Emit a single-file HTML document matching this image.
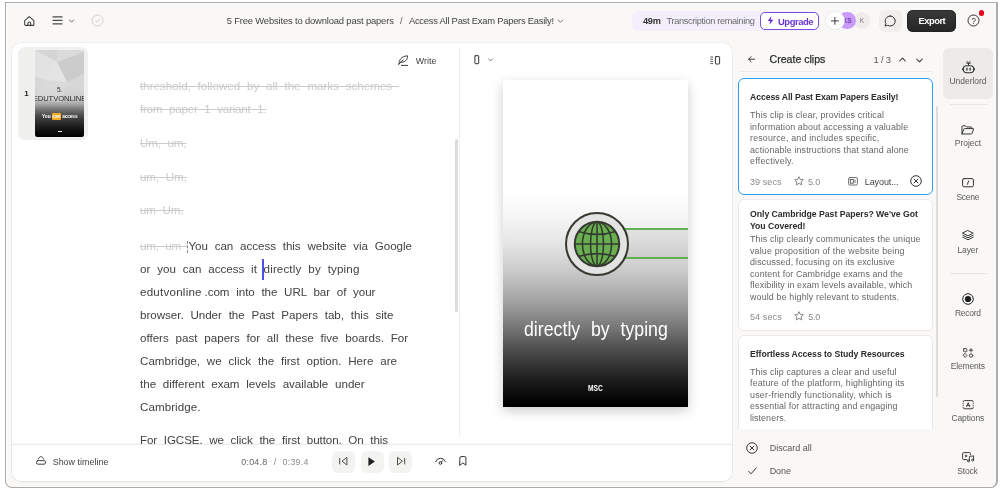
<!DOCTYPE html>
<html lang="en">
<head>
<meta charset="utf-8">
<title>Descript – Create clips</title>
<style>
*{box-sizing:border-box;margin:0;padding:0}
html,body{width:1000px;height:491px;overflow:hidden;background:#fff}
body{font-family:"Liberation Sans",sans-serif;color:#222;position:relative;font-size:10px}
#app{position:absolute;left:0;top:0;width:1000px;height:491px;will-change:transform}
.a{position:absolute}
.t{position:absolute;white-space:pre;line-height:1}
#frame{left:5px;top:2.2px;width:993px;height:485.6px;background:#f9f8f6;border:1.6px solid #ababab;border-right-width:2px;border-radius:0 0 7px 7px;box-shadow:inset 0 0 0 1px rgba(255,255,255,.55)}
#main{left:12px;top:42.5px;width:720px;height:438.5px;background:#fff;border-radius:9px;box-shadow:0 0 0 0.6px rgba(0,0,0,.07),0 1px 2px rgba(0,0,0,.05)}
svg{position:absolute;overflow:visible}
.ic{fill:none;stroke-linecap:round;stroke-linejoin:round}
.s{text-decoration:line-through;text-decoration-thickness:1px}
.card{position:absolute;left:738px;width:195px;background:#fff;border-radius:6px;border:1px solid #ebeae8}
.btn{position:absolute;top:450.5px;width:23px;height:22px;border-radius:6px;background:#f3f3f2}
</style>
</head>
<body>
<div id="app">
<div id="frame" class="a"></div>

<!-- top bar -->
<svg style="left:23.5px;top:15.6px" width="10.6" height="10" viewBox="0 0 10.6 10"><path class="ic" stroke="#3d3d3d" stroke-width="1.05" d="M0.7 4.6 L5.3 0.7 L9.9 4.6 V8.4 a1 1 0 0 1 -1 1 H1.7 a1 1 0 0 1 -1 -1 Z M3.9 9.3 V7.3 a1.4 1.4 0 0 1 2.8 0 V9.3"/></svg>
<svg style="left:53px;top:16px" width="22" height="9" viewBox="0 0 22 9"><path class="ic" stroke="#4a4a4a" stroke-width="1.25" stroke-linecap="butt" d="M0 0.9 H9 M0 4.35 H9 M0 7.8 H9"/><path class="ic" stroke-width="0.95" stroke="#666" d="M16.4 3.9 L18.6 6.2 L20.8 3.9"/></svg>
<svg style="left:90.8px;top:14.2px" width="13" height="13" viewBox="0 0 13 13"><circle cx="6.5" cy="6.5" r="5.5" fill="none" stroke="#d0d0d0" stroke-width="1"/><path d="M4.3 6.7 L5.9 8.2 L8.8 4.9" fill="none" stroke="#d0d0d0" stroke-width="1"/></svg>
<span class="t" style="left:226.7px;top:16px;font-size:9.4px;color:#444;letter-spacing:-0.150px;">5 Free Websites to download past papers</span><span class="t" style="left:400.0px;top:16px;font-size:9.4px;color:#555;">/</span><span class="t" style="left:408.9px;top:16px;font-size:9.4px;color:#444;letter-spacing:-0.237px;">Access All Past Exam Papers Easily!</span>
<svg style="left:557px;top:18.5px" width="7" height="5" viewBox="0 0 7 5"><path class="ic" stroke="#666" stroke-width="0.9" d="M1.2 1 L3.5 3.3 L5.8 1"/></svg>

<div class="a" style="left:632px;top:11px;width:188px;height:20px;border-radius:6px;background:#f3effc"></div>
<span class="t" style="left:643.0px;top:17px;font-size:9.2px;color:#333;font-weight:bold;letter-spacing:-0.264px;">49m</span><span class="t" style="left:666.6px;top:17px;font-size:9.2px;color:#6b6b6b;letter-spacing:-0.334px;">Transcription remaining</span>
<div class="a" style="left:760px;top:12px;width:59px;height:18px;border-radius:5px;background:#fff;border:1px solid #7c4ddb"></div>
<svg style="left:767px;top:16.3px" width="7" height="9" viewBox="0 0 7 9"><path d="M4.3 0.2 L0.6 5.1 H3.1 L2.5 8.8 L6.4 3.8 H3.8 Z" fill="#6a35d8"/></svg>
<span class="t" style="left:778.0px;top:17px;font-size:9.4px;color:#6a35d8;font-weight:bold;letter-spacing:-0.433px;">Upgrade</span>
<div class="a" style="left:853.5px;top:12.1px;width:16.8px;height:16.8px;border-radius:50%;background:#eeedeb"></div>
<span class="t" style="left:859.7px;top:18px;font-size:6.6px;color:#777;">K</span>
<div class="a" style="left:838.2px;top:11.8px;width:17.7px;height:17.7px;border-radius:50%;background:#cb9bfb"></div>
<span class="t" style="left:842.4px;top:18px;font-size:6.7px;color:#6d3fae;font-weight:bold;">KS</span>
<div class="a" style="left:826px;top:11.6px;width:17.8px;height:17.8px;border-radius:50%;background:#fff;box-shadow:0 0 0 0.8px #e9e8e6"></div>
<svg style="left:831.2px;top:16.6px" width="7.8" height="7.8" viewBox="0 0 7.8 7.8"><path class="ic" stroke="#333" stroke-width="0.95" d="M3.9 0.4 V7.4 M0.4 3.9 H7.4"/></svg>

<div class="a" style="left:879px;top:10px;width:22.5px;height:22px;border-radius:6px;background:#f0efed"></div>
<svg style="left:884px;top:14.6px" width="12" height="12" viewBox="0 0 12 12"><path class="ic" stroke="#333" stroke-width="1" d="M6.2 1 a5 5 0 1 1 -2.5 9.3 L1 11 L1.8 8.4 A5 5 0 0 1 6.2 1 Z"/></svg>

<div class="a" style="left:907.2px;top:10px;width:49.2px;height:22px;border-radius:6px;background:linear-gradient(180deg,#3a3a3a,#252525);box-shadow:inset 0 0 0 0.6px #1c1c1c"></div>
<span class="t" style="left:918.6px;top:16px;font-size:9.4px;color:#fff;font-weight:bold;letter-spacing:-0.534px;">Export</span>
<svg style="left:967px;top:14.2px" width="13" height="13" viewBox="0 0 13 13"><circle cx="6.5" cy="6.5" r="5.5" fill="none" stroke="#333" stroke-width="1"/></svg>
<span class="t" style="left:971.3px;top:17px;font-size:8.4px;color:#333;">?</span>
<div class="a" style="left:978.8px;top:10.3px;width:5.4px;height:5.4px;border-radius:50%;background:#e2001a"></div>

<div id="main" class="a"></div>
<!-- scene rail -->
<div class="a" style="left:18px;top:47px;width:69.5px;height:92.5px;border-radius:7px;background:#f0f0ef"></div>
<span class="t" style="left:24.3px;top:90px;font-size:8px;color:#222;font-weight:bold;">1</span>
<div class="a" style="left:35.3px;top:50px;width:48.6px;height:86.7px;border-radius:2.5px;overflow:hidden;background:linear-gradient(180deg,#d4d4d4 0%,#d8d8d8 40%,#cfcfcf 55%,#a8a8a8 62%,#707070 69%,#484848 76%,#262626 85%,#0c0c0c 94%,#000 100%)">
  <svg style="left:0;top:0" width="49" height="52" viewBox="0 0 49 52" opacity=".75"><path d="M0 0 L22 12 L10 30 L0 26 Z" fill="#e6e6e6"/><path d="M22 12 L49 2 L49 24 L32 32 Z" fill="#c9c9c9"/><path d="M10 30 L32 32 L26 52 L0 48 Z" fill="#dfdfdf" opacity=".6"/><path d="M22 12 L32 32 L10 30 Z" fill="#e9e9e9"/><path d="M22 0 L49 0 L49 2 L22 12 Z" fill="#dcdcdc"/></svg>
  <span class="t" style="left:21.8px;top:37px;font-size:6.6px;color:#333">5.</span>
  <span class="t" style="left:-2.6px;top:45px;font-size:7.6px;color:#2a2a2a;letter-spacing:-0.05px">EDUTVONLINE</span>
  <div class="a" style="left:16.6px;top:62.8px;width:8.8px;height:7.2px;background:#f4a81d;border-radius:1px"></div>
  <span class="t" style="left:6.8px;top:65px;font-size:4.8px;color:#fff;font-weight:bold;word-spacing:0.7px;letter-spacing:-0.12px">You can access</span>
  <div class="a" style="left:22.6px;top:80.6px;width:4px;height:1.4px;background:#e4e4e4"></div>
</div>

<!-- transcript -->
<svg style="left:398px;top:55px" width="11" height="11" viewBox="0 0 11 11"><path class="ic" stroke="#333" stroke-width="0.95" d="M1 9 C0.8 5.6 2.8 1.4 9.4 0.8 C10 5.2 6.6 7.6 2.2 7.2 M0.6 9.4 L5.2 5 M3.4 10.4 H9.6"/></svg>
<span class="t" style="left:415.8px;top:57px;font-size:8.9px;color:#444;letter-spacing:0.051px;">Write</span><span class="t" style="left:139.9px;top:80px;font-size:11.6px;color:#cbcbcb;word-spacing:3.6px;letter-spacing:-0.001px;text-decoration:line-through;text-decoration-thickness:1px;">threshold, followed by all the marks schemes </span><span class="t" style="left:139.9px;top:103px;font-size:11.6px;color:#cbcbcb;word-spacing:3.6px;letter-spacing:-0.193px;text-decoration:line-through;text-decoration-thickness:1px;">from paper 1 variant 1.</span><span class="t" style="left:140.0px;top:137px;font-size:11.6px;color:#cbcbcb;word-spacing:3.6px;letter-spacing:-0.144px;text-decoration:line-through;text-decoration-thickness:1px;">Um, um,</span><span class="t" style="left:140.0px;top:171px;font-size:11.6px;color:#cbcbcb;word-spacing:3.6px;letter-spacing:-0.101px;text-decoration:line-through;text-decoration-thickness:1px;">um, Um,</span><span class="t" style="left:140.0px;top:204px;font-size:11.6px;color:#cbcbcb;word-spacing:3.6px;letter-spacing:-0.131px;text-decoration:line-through;text-decoration-thickness:1px;">um Um,</span><span class="t" style="left:140.0px;top:240px;font-size:11.6px;color:#cbcbcb;word-spacing:3.6px;letter-spacing:-0.240px;text-decoration:line-through;text-decoration-thickness:1px;">um, um </span><span class="t" style="left:188.4px;top:240px;font-size:11.6px;color:#424242;word-spacing:3.6px;letter-spacing:-0.032px;">You can access this website via Google</span><span class="t" style="left:140.0px;top:263px;font-size:11.6px;color:#424242;word-spacing:3.6px;letter-spacing:0.002px;">or you can access it</span><span class="t" style="left:263.6px;top:263px;font-size:11.6px;color:#424242;word-spacing:3.6px;letter-spacing:0.130px;">directly by typing</span><span class="t" style="left:140.0px;top:286px;font-size:11.6px;color:#424242;word-spacing:3.6px;letter-spacing:0.226px;">edutvonline</span><span class="t" style="left:204.6px;top:286px;font-size:11.6px;color:#424242;word-spacing:3.6px;letter-spacing:-0.062px;">.com into the URL bar of your</span><span class="t" style="left:140.0px;top:309px;font-size:11.6px;color:#424242;word-spacing:3.6px;letter-spacing:-0.027px;">browser. Under the Past Papers tab, this site</span><span class="t" style="left:140.0px;top:332px;font-size:11.6px;color:#424242;word-spacing:3.6px;letter-spacing:-0.004px;">offers past papers for all these five boards. For</span><span class="t" style="left:140.0px;top:355px;font-size:11.6px;color:#424242;word-spacing:3.6px;letter-spacing:0.010px;">Cambridge, we click the first option. Here are</span><span class="t" style="left:140.0px;top:378px;font-size:11.6px;color:#424242;word-spacing:3.6px;letter-spacing:-0.017px;">the different exam levels available under</span><span class="t" style="left:140.0px;top:401px;font-size:11.6px;color:#424242;word-spacing:3.6px;letter-spacing:0.056px;">Cambridge.</span><span class="t" style="left:140.0px;top:434px;font-size:11.6px;color:#424242;word-spacing:3.6px;letter-spacing:-0.098px;">For IGCSE, we click the first button. On this</span>
<div class="a" style="left:187.1px;top:241px;width:0;height:12px;border-left:1px dashed #8a8a8a"></div>
<div class="a" style="left:262.3px;top:258.5px;width:1.3px;height:21.5px;background:#4a52e0"></div>
<div class="a" style="left:455.3px;top:139px;width:2.6px;height:173px;border-radius:2px;background:#dcdcdc"></div>
<div class="a" style="left:459px;top:48px;width:1px;height:389px;background:#f0f0f0"></div>

<!-- video header icons -->
<svg style="left:474px;top:55px" width="20" height="10" viewBox="0 0 20 10"><rect x="0.9" y="0.7" width="3.8" height="8" rx="0.4" class="ic" stroke="#333" stroke-width="1"/><path class="ic" stroke="#666" stroke-width="0.9" d="M14.6 3.9 L16.6 5.9 L18.6 3.9"/></svg>
<svg style="left:709.5px;top:55.5px" width="11" height="9" viewBox="0 0 11 9"><path d="M0.3 1 H3 M0.3 3.2 H3 M0.3 5.4 H3 M0.3 7.6 H3" stroke="#444" stroke-width="0.9" fill="none"/><rect x="5.4" y="0.6" width="4.2" height="7.4" rx="0.6" class="ic" stroke="#333" stroke-width="1"/></svg>

<!-- canvas -->
<div class="a" style="left:503px;top:79.5px;width:185px;height:327.5px;overflow:hidden;box-shadow:0 4px 11px rgba(0,0,0,.2);background:linear-gradient(180deg,#fff 0.0%,#fff 34.4%,#f5f5f5 42.0%,#e5e5e5 49.9%,#cdcdcd 57.6%,#b2b2b2 64.3%,#949494 70.4%,#757575 75.9%,#505050 82.0%,#323232 87.5%,#161616 93.3%,#050505 97.9%,#000 100.0%)">
  <div class="a" style="left:120px;top:148.5px;width:65px;height:30.5px;background:rgba(0,0,0,.05);border-top:2px solid #62b04e;border-bottom:2px solid #62b04e"></div>
  <svg style="left:62.1px;top:132.2px" width="64" height="64" viewBox="-32 -32 64 64">
    <circle r="31" fill="#e3e3e3" stroke="#353a30" stroke-width="2"/>
    <circle r="22.2" fill="#69af50" stroke="#353a30" stroke-width="2"/>
    <g fill="none" stroke="#353a30" stroke-width="1.6">
      <path d="M0 -22 V22 M-22 0 H22"/>
      <ellipse rx="6.5" ry="22"/>
      <ellipse rx="14.6" ry="22"/>
      <path d="M-18.5 -12.6 Q0 -6.6 18.5 -12.6 M-18.5 12.6 Q0 6.6 18.5 12.6"/>
    </g>
  </svg>
  <span class="t" style="left:20.6px;top:238px;font-size:21px;color:#fff;word-spacing:6.9px;transform:scaleX(0.845);transform-origin:0 50%">directly by typing</span>
  <span class="t" style="left:84.8px;top:304.4px;font-size:8.4px;font-weight:bold;color:#fff;transform:scaleX(0.8);transform-origin:0 50%">MSC</span>
</div>

<!-- playback bar -->
<div class="a" style="left:12px;top:444px;width:720px;height:37px;background:#fff;border-radius:0 0 9px 9px;border-top:1px solid #ebebeb;box-shadow:0 -1px 2px rgba(0,0,0,.03)"></div>
<svg style="left:35.9px;top:456.1px" width="10" height="9" viewBox="0 0 10 9"><path class="ic" stroke-width="1" stroke="#444" d="M2.4 3 C3 1.4 4 0.6 5 0.6 C6 0.6 7 1.4 7.6 3"/><rect x="0.6" y="4.6" width="8.8" height="3.6" rx="1.2" class="ic" stroke-width="1" stroke="#444"/></svg>
<span class="t" style="left:52.7px;top:458px;font-size:8.9px;color:#444;letter-spacing:0.035px;">Show timeline</span><span class="t" style="left:241.2px;top:458px;font-size:8.9px;color:#666;letter-spacing:0.269px;">0:04.8</span><span class="t" style="left:273.8px;top:458px;font-size:8.9px;color:#888;">/</span><span class="t" style="left:282.5px;top:458px;font-size:8.9px;color:#8a8a8a;letter-spacing:0.252px;">0:39.4</span>
<div class="btn" style="left:331.8px"></div>
<div class="btn" style="left:360.6px"></div>
<div class="btn" style="left:389px"></div>
<svg style="left:339.4px;top:457px" width="8.4" height="8.4" viewBox="0 0 8.4 8.4"><path class="ic" stroke="#444" stroke-width="0.95" d="M0.7 1.4 V7 M7.6 0.6 L3 4.2 L7.6 7.8 Z"/></svg>
<svg style="left:368.4px;top:456.6px" width="7.4" height="9.2" viewBox="0 0 7.4 9.2"><path d="M0.4 0.3 L7 4.6 L0.4 8.9 Z" fill="#222"/></svg>
<svg style="left:396.6px;top:457px" width="8.4" height="8.4" viewBox="0 0 8.4 8.4"><path class="ic" stroke="#444" stroke-width="0.95" d="M7.7 1.4 V7 M0.8 0.6 L5.4 4.2 L0.8 7.8 Z"/></svg>
<svg style="left:435px;top:455.8px" width="11" height="9" viewBox="0 0 11 9"><path class="ic" stroke="#333" stroke-width="1" d="M0.7 5.6 A5.1 5.1 0 0 1 10.3 5.6"/><circle cx="5.4" cy="7" r="1.35" class="ic" stroke="#333" stroke-width="0.95"/><path class="ic" stroke="#333" stroke-width="0.95" d="M6.3 6 L7.5 4.7"/></svg>
<svg style="left:459px;top:456px" width="7.8" height="9.9" viewBox="0 0 7.8 9.9"><path class="ic" stroke="#333" stroke-width="1" d="M0.9 1.6 a1 1 0 0 1 1 -1 H5.9 a1 1 0 0 1 1 1 V9.2 L3.9 6.9 L0.9 9.2 Z"/></svg>

<!-- create clips panel -->
<svg style="left:748px;top:56.1px" width="7.2" height="6.4" viewBox="0 0 7.2 6.4"><path class="ic" stroke="#333" stroke-width="0.95" d="M6.7 3.2 H0.7 M3.2 0.7 L0.7 3.2 L3.2 5.7"/></svg>
<span class="t" style="left:769.6px;top:54px;font-size:10.6px;color:#2e2e2e;letter-spacing:-0.020px;-webkit-text-stroke:0.25px #2e2e2e;">Create clips</span><span class="t" style="left:873.6px;top:55px;font-size:9.4px;color:#555;letter-spacing:-0.210px;">1 / 3</span>
<svg style="left:899px;top:57px" width="7" height="5" viewBox="0 0 7 5"><path class="ic" stroke="#333" stroke-width="1.05" d="M0.7 4 L3.5 1.1 L6.3 4"/></svg>
<svg style="left:916px;top:57.6px" width="7" height="5" viewBox="0 0 7 5"><path class="ic" stroke="#333" stroke-width="1.05" d="M0.7 1 L3.5 3.9 L6.3 1"/></svg>
<div class="a" style="left:739px;top:70.8px;width:193px;height:1px;background:#ecebe9"></div>

<div class="card" style="top:77.5px;height:117.5px;border:1.7px solid #2a9df5"></div>
<span class="t" style="left:750.0px;top:93px;font-size:8.7px;color:#2b2b2b;font-weight:bold;letter-spacing:-0.098px;">Access All Past Exam Papers Easily!</span><span class="t" style="left:750.0px;top:111px;font-size:8.9px;color:#666;letter-spacing:0.145px;">This clip is clear, provides critical</span><span class="t" style="left:750.0px;top:123px;font-size:8.9px;color:#666;letter-spacing:0.125px;">information about accessing a valuable</span><span class="t" style="left:750.0px;top:134px;font-size:8.9px;color:#666;letter-spacing:0.177px;">resource, and includes specific,</span><span class="t" style="left:750.0px;top:146px;font-size:8.9px;color:#666;letter-spacing:0.136px;">actionable instructions that stand alone</span><span class="t" style="left:750.0px;top:157px;font-size:8.9px;color:#666;letter-spacing:0.224px;">effectively.</span><span class="t" style="left:750.0px;top:178px;font-size:9px;color:#8a8a8a;letter-spacing:0.081px;">39 secs</span><span class="t" style="left:808.0px;top:178px;font-size:9px;color:#8a8a8a;letter-spacing:-0.172px;">5.0</span><span class="t" style="left:864.8px;top:178px;font-size:9px;color:#444;letter-spacing:-0.103px;">Layout...</span>
<svg style="left:794.3px;top:176.4px" width="10" height="10" viewBox="0 0 10 10"><path d="M5 0.7 L6.3 3.5 L9.3 3.8 L7.1 5.9 L7.7 8.9 L5 7.4 L2.3 8.9 L2.9 5.9 L0.7 3.8 L3.7 3.5 Z" fill="none" stroke="#777" stroke-width="0.9" stroke-linejoin="round"/></svg>
<svg style="left:848px;top:177.2px" width="10" height="8.6" viewBox="0 0 10 8.6"><rect x="0.6" y="0.6" width="8.8" height="7.4" rx="1.2" class="ic" stroke-width="0.95" stroke="#666"/><rect x="2.3" y="2.4" width="3" height="3.8" fill="none" stroke="#444" stroke-width="0.8"/><path d="M7 2.6 V6" stroke="#444" stroke-width="0.8"/></svg>
<svg style="left:909.6px;top:175.3px" width="12" height="12" viewBox="0 0 12 12"><circle cx="6" cy="6" r="5.3" fill="none" stroke="#333" stroke-width="1"/><path d="M4 4 L8 8 M8 4 L4 8" stroke="#333" stroke-width="1" stroke-linecap="round"/></svg>

<div class="card" style="top:199px;height:132.3px"></div>
<span class="t" style="left:750.0px;top:210px;font-size:8.7px;color:#2b2b2b;font-weight:bold;letter-spacing:-0.031px;">Only Cambridge Past Papers? We&#x27;ve Got</span><span class="t" style="left:750.0px;top:222px;font-size:8.7px;color:#2b2b2b;font-weight:bold;letter-spacing:-0.045px;">You Covered!</span><span class="t" style="left:750.0px;top:235px;font-size:8.9px;color:#666;letter-spacing:0.154px;">This clip clearly communicates the unique</span><span class="t" style="left:750.0px;top:247px;font-size:8.9px;color:#666;letter-spacing:0.163px;">value proposition of the website being</span><span class="t" style="left:750.0px;top:258px;font-size:8.9px;color:#666;letter-spacing:0.133px;">discussed, focusing on its exclusive</span><span class="t" style="left:750.0px;top:270px;font-size:8.9px;color:#666;letter-spacing:0.131px;">content for Cambridge exams and the</span><span class="t" style="left:750.0px;top:281px;font-size:8.9px;color:#666;letter-spacing:0.115px;">flexibility in exam levels available, which</span><span class="t" style="left:750.0px;top:293px;font-size:8.9px;color:#666;letter-spacing:0.152px;">would be highly relevant to students.</span><span class="t" style="left:750.0px;top:313px;font-size:9px;color:#8a8a8a;letter-spacing:0.110px;">54 secs</span><span class="t" style="left:808.2px;top:313px;font-size:9px;color:#8a8a8a;letter-spacing:-0.239px;">5.0</span>
<svg style="left:794.3px;top:311.4px" width="10" height="10" viewBox="0 0 10 10"><path d="M5 0.7 L6.3 3.5 L9.3 3.8 L7.1 5.9 L7.7 8.9 L5 7.4 L2.3 8.9 L2.9 5.9 L0.7 3.8 L3.7 3.5 Z" fill="none" stroke="#777" stroke-width="0.9" stroke-linejoin="round"/></svg>

<div class="card" style="top:335px;height:94px;border-radius:6px 6px 0 0;border-bottom:none"></div>
<span class="t" style="left:750.0px;top:350px;font-size:8.7px;color:#2b2b2b;font-weight:bold;letter-spacing:-0.055px;">Effortless Access to Study Resources</span><span class="t" style="left:750.0px;top:368px;font-size:8.9px;color:#666;letter-spacing:0.138px;">This clip captures a clear and useful</span><span class="t" style="left:750.0px;top:379px;font-size:8.9px;color:#666;letter-spacing:0.161px;">feature of the platform, highlighting its</span><span class="t" style="left:750.0px;top:391px;font-size:8.9px;color:#666;letter-spacing:0.216px;">user-friendly functionality, which is</span><span class="t" style="left:750.0px;top:402px;font-size:8.9px;color:#666;letter-spacing:0.122px;">essential for attracting and engaging</span><span class="t" style="left:750.0px;top:414px;font-size:8.9px;color:#666;letter-spacing:0.068px;">listeners.</span>
<div class="a" style="left:736px;top:428.5px;width:200px;height:55px;background:#f9f8f6"></div>
<div class="a" style="left:936px;top:106px;width:2.4px;height:291px;border-radius:2px;background:#dddcda"></div>

<svg style="left:745.7px;top:441.5px" width="12" height="12" viewBox="0 0 12 12"><circle cx="6" cy="6" r="5.3" fill="none" stroke="#333" stroke-width="1"/><path d="M4 4 L8 8 M8 4 L4 8" stroke="#333" stroke-width="1" stroke-linecap="round"/></svg>
<span class="t" style="left:769.7px;top:444px;font-size:9px;color:#555;letter-spacing:-0.001px;">Discard all</span>
<svg style="left:748px;top:466.5px" width="9" height="8" viewBox="0 0 9 8"><path class="ic" stroke="#333" stroke-width="1" d="M0.7 4.4 L3 6.8 L8.3 0.8"/></svg>
<span class="t" style="left:769.7px;top:467px;font-size:9px;color:#555;letter-spacing:-0.079px;">Done</span>
<!-- tool rail -->
<div class="a" style="left:942.8px;top:48px;width:50.4px;height:50.7px;border-radius:6px;background:#ecebe9"></div>
<svg style="left:961.6px;top:60.8px" width="13" height="12.4" viewBox="0 0 13 12.4"><path class="ic" stroke="#333" stroke-width="0.95" d="M4.9 0.6 L6.5 2 L8.1 0.6 M4.6 2.2 H8.4 M6.5 2.2 V4.6"/><rect x="1.3" y="4.7" width="10.4" height="7" rx="3.2" class="ic" stroke="#333" stroke-width="1.05"/><path class="ic" stroke="#333" stroke-width="0.9" d="M1.3 7.4 H0.5 V9 H1.3 M11.7 7.4 H12.5 V9 H11.7"/><path d="M4.9 7.2 V9 M8.1 7.2 V9" stroke="#333" stroke-width="1.3" stroke-linecap="round"/></svg>
<span class="t" style="left:949.5px;top:77px;font-size:8.5px;color:#5a5a5a;letter-spacing:-0.036px;">Underlord</span>
<div class="a" style="left:949.5px;top:104.3px;width:37px;height:1px;background:#e6e5e3"></div>
<svg style="left:961.4px;top:125px" width="13.4" height="10" viewBox="0 0 13.4 10"><path class="ic" stroke="#333" stroke-width="1" d="M1 8.6 V1.6 a0.8 0.8 0 0 1 0.8 -0.8 H4.6 L5.8 2 H10 a0.8 0.8 0 0 1 0.8 0.8 V3.6 M1 8.8 L2.8 4.2 a0.9 0.9 0 0 1 0.8 -0.6 H12 a0.5 0.5 0 0 1 0.5 0.7 L11 8.4 a0.9 0.9 0 0 1 -0.8 0.6 H1.4 Z"/></svg>
<span class="t" style="left:954.8px;top:139px;font-size:8.5px;color:#5a5a5a;letter-spacing:-0.010px;">Project</span>
<svg style="left:962px;top:178px" width="12" height="9.4" viewBox="0 0 12 9.4"><rect x="0.6" y="0.6" width="10.8" height="8.2" rx="1.3" class="ic" stroke="#333" stroke-width="1"/><path d="M6.6 3 L5.4 6.4" stroke="#333" stroke-width="1" stroke-linecap="round"/></svg>
<span class="t" style="left:956.4px;top:193px;font-size:8.5px;color:#5a5a5a;letter-spacing:-0.242px;">Scene</span>
<svg style="left:962px;top:230px" width="12" height="10.4" viewBox="0 0 12 10.4"><path class="ic" stroke="#333" stroke-width="0.95" d="M6 0.6 L11.2 3.2 L6 5.8 L0.8 3.2 Z M0.8 5.2 L6 7.8 L11.2 5.2 M0.8 7.2 L6 9.8 L11.2 7.2"/></svg>
<span class="t" style="left:957.5px;top:246px;font-size:8.5px;color:#5a5a5a;letter-spacing:-0.113px;">Layer</span>
<div class="a" style="left:949.5px;top:273px;width:37px;height:1px;background:#e6e5e3"></div>
<svg style="left:961.8px;top:293px" width="12" height="12" viewBox="0 0 12 12"><circle cx="6" cy="6" r="5.3" fill="none" stroke="#222" stroke-width="1"/><circle cx="6" cy="6" r="3.1" fill="#1c1c1c"/></svg>
<span class="t" style="left:955.0px;top:309px;font-size:8.5px;color:#5a5a5a;letter-spacing:-0.301px;">Record</span>
<svg style="left:962.6px;top:347.6px" width="10.6" height="10" viewBox="0 0 10.6 10"><rect x="0.6" y="0.6" width="3.2" height="3.2" rx="0.6" class="ic" stroke="#333" stroke-width="0.9"/><path class="ic" stroke="#333" stroke-width="0.9" d="M8 0.5 V4 M6.2 2.2 H9.8"/><path class="ic" stroke="#333" stroke-width="0.9" d="M2.2 5.6 L4 7.5 L2.2 9.4 L0.4 7.5 Z"/><circle cx="8" cy="7.6" r="1.7" class="ic" stroke="#333" stroke-width="0.9"/></svg>
<span class="t" style="left:950.8px;top:362px;font-size:8.5px;color:#5a5a5a;letter-spacing:-0.167px;">Elements</span>
<svg style="left:962px;top:400.2px" width="12.4" height="9.4" viewBox="0 0 12.4 9.4"><path class="ic" stroke="#333" stroke-width="0.95" d="M1.2 2 V1.8 a1.2 1.2 0 0 1 1.2 -1.2 H10 a1.2 1.2 0 0 1 1.2 1.2 V2 M1.2 7.4 V7.6 a1.2 1.2 0 0 0 1.2 1.2 H10 a1.2 1.2 0 0 0 1.2 -1.2 V7.4"/><path d="M1.2 3.2 V6.4 M11.2 3.2 V6.4" fill="none" stroke="#333" stroke-width="0.95" stroke-dasharray="1.1 0.9"/><path d="M4.6 6.8 L6.2 2.7 L7.8 6.8 M5.2 5.5 H7.2" fill="none" stroke="#333" stroke-width="0.9" stroke-linecap="round" stroke-linejoin="round"/></svg>
<span class="t" style="left:951.4px;top:414px;font-size:8.5px;color:#5a5a5a;letter-spacing:-0.095px;">Captions</span>
<svg style="left:962px;top:452px" width="12.6" height="10.4" viewBox="0 0 12.6 10.4"><path class="ic" stroke="#333" stroke-width="0.95" d="M4.8 7.6 H1.6 a1 1 0 0 1 -1 -1 V1.6 a1 1 0 0 1 1 -1 H7.4 a1 1 0 0 1 1 1 V3"/><path d="M3.2 2.4 L5.8 4 L3.2 5.6 Z" fill="#333"/><path class="ic" stroke="#333" stroke-width="0.9" d="M7.4 8.8 V4.6 L11.6 3.8 V8"/><circle cx="6.4" cy="8.9" r="1" class="ic" stroke="#333" stroke-width="0.9"/><circle cx="10.6" cy="8.1" r="1" class="ic" stroke="#333" stroke-width="0.9"/></svg>
<span class="t" style="left:957.3px;top:467px;font-size:8.5px;color:#5a5a5a;letter-spacing:-0.173px;">Stock</span>
</div>
</body>
</html>
